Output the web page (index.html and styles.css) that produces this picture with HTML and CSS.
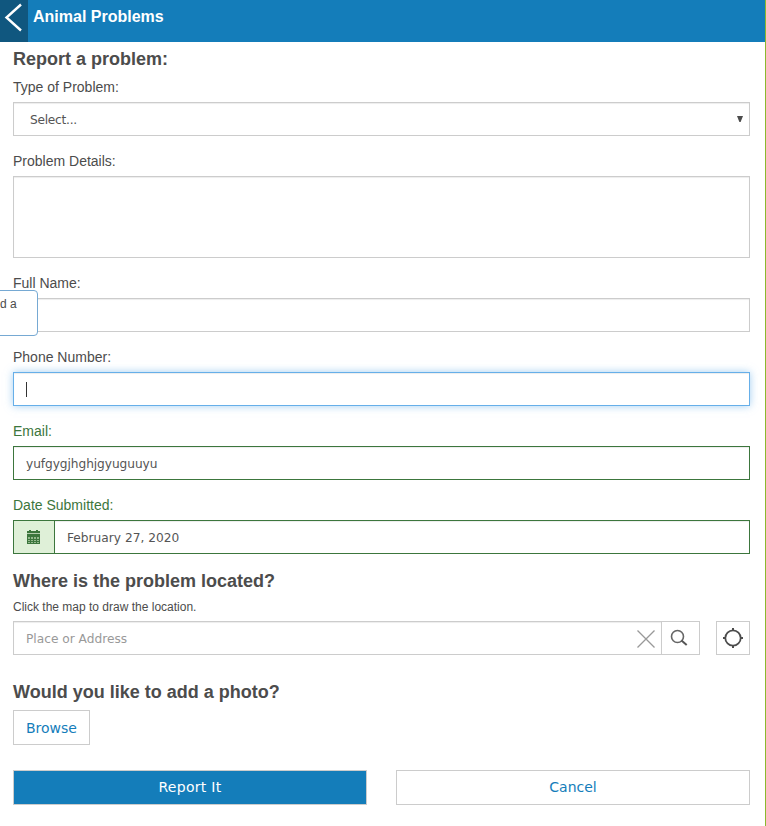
FILE: index.html
```html
<!DOCTYPE html>
<html lang="en">
<head>
  <meta charset="UTF-8">
  <meta name="viewport" content="width=device-width, initial-scale=1.0">
  <title>Animal Problems</title>
  <link rel="stylesheet" href="styles.css">
</head>
<body>
  <div class="panel">
    <div class="header">
      <button type="button" class="back">
        <svg width="28" height="42" viewBox="0 0 28 42"><path d="M21 4.5 L6.5 17.5 L21 30.5" fill="none" stroke="#fff" stroke-width="2.4"/></svg>
      </button>
      <h1>Animal Problems</h1>
    </div>

    <form class="report">
      <h2>Report a problem:</h2>

      <div class="group">
        <label for="type">Type of Problem:</label>
        <div class="select">
          <select id="type" class="control"><option>Select...</option></select>
          <svg class="arrow" width="6" height="6" viewBox="0 0 6 6"><path d="M0 0 H6 L3.6 6 H2.4 Z" fill="#4c4c4c"/></svg>
        </div>
      </div>
      <div class="group">
        <label for="details">Problem Details:</label>
        <textarea id="details" class="control"></textarea>
      </div>
      <div class="group">
        <label for="name">Full Name:</label>
        <input type="text" id="name" class="control">
        <div class="tip">d a</div>
      </div>
      <div class="group">
        <label>Phone Number:</label>
        <div class="control focused"><span class="caret"></span></div>
      </div>
      <div class="group valid">
        <label for="email">Email:</label>
        <input type="text" id="email" class="control" value="yufgygjhghjgyuguuyu">
      </div>
      <div class="group valid">
        <label for="date">Date Submitted:</label>
        <div class="input-row">
          <span class="addon">
            <svg width="13" height="14" viewBox="0 0 13 14" shape-rendering="crispEdges">
              <path d="M2 0h2v1H2z M9 0h2v1H9z M0 1h13v2H0z M0 4h13v10H0z" fill="#3c763d"/>
              <path d="M0 3h13v1H0z" fill="#b3cdad"/>
              <path d="M1 7h2v2H1z M4 7h2v2H4z M7 7h2v2H7z M10 7h2v2h-2z M1 10h2v1H1z M4 10h2v1H4z M7 10h2v1H7z M10 10h2v1h-2z M1 12h2v1H1z M4 12h2v1H4z M7 12h2v1H7z M10 12h2v1h-2z" fill="#95b98e"/>
            </svg>
          </span>
          <input type="text" id="date" class="control" value="February 27, 2020">
        </div>
      </div>

      <h2 class="where">Where is the problem located?</h2>
      <p>Click the map to draw the location.</p>
      <div class="search-row">
        <div class="search">
          <input type="text" class="control" placeholder="Place or Address">
          <svg class="clear" width="18" height="18" viewBox="0 0 18 18"><path d="M0.5 0.5 L17.5 17.5 M17.5 0.5 L0.5 17.5" stroke="#999" stroke-width="1.3"/></svg>
          <button type="button" class="find">
            <svg width="18" height="18" viewBox="0 0 18 18"><circle cx="7.5" cy="7.5" r="6" fill="none" stroke="#666" stroke-width="1.6"/><path d="M11.5 11.5 L16.7 16" stroke="#555" stroke-width="2"/></svg>
          </button>
        </div>
        <button type="button" class="locate">
          <svg width="20" height="20" viewBox="0 0 20 20"><circle cx="10" cy="10" r="7.7" fill="none" stroke="#4c4c4c" stroke-width="1.8"/><path d="M10 0 V3 M10 17 V20 M0 10 H3 M17 10 H20" stroke="#4c4c4c" stroke-width="2"/></svg>
        </button>
      </div>

      <h2 class="photo">Would you like to add a photo?</h2>
      <button type="button" class="btn browse">Browse</button>

      <div class="actions">
        <button type="button" class="btn primary">Report It</button>
        <button type="button" class="btn">Cancel</button>
      </div>
    </form>
  </div>
</body>
</html>
```

FILE: styles.css
```css
* {
  box-sizing: border-box;
}
body {
  margin: 0;
  background: #fff;
  color: #4c4c4c;
  font: 14px/20px "Liberation Sans", Arial, sans-serif;
}
.panel {
  height: 826px;
  border-right: 1px solid #8cb82e;
}
.header {
  display: flex;
  height: 42px;
  background: #147dba;
}
.back {
  width: 28px;
  height: 42px;
  padding: 0;
  border: 0;
  background: #10577f;
}
.back svg {
  display: block;
}
h1 {
  margin: 7px 0 0 5px;
  color: #fff;
  font-size: 16px;
  line-height: 20px;
}
.report {
  padding: 7px 15px 0 13px;
}
h2 {
  margin: 0;
  font-size: 18px;
  line-height: 20px;
}
.group {
  position: relative;
  margin-bottom: 15px;
}
h2 + .group {
  margin-top: 8px;
}
label {
  display: block;
  margin-bottom: 5px;
}
.control {
  display: block;
  width: 100%;
  height: 34px;
  padding: 7px 12px 5px;
  border: 1px solid #ccc;
  border-radius: 0;
  outline: 0;
  background: #fff;
  box-shadow: inset 0 1px 1px rgba(0, 0, 0, .075);
  color: #555;
  font: 12.2px/20px "DejaVu Sans", Verdana, sans-serif;
}
.control::placeholder {
  color: #999;
}
textarea.control {
  height: 82px;
  resize: none;
}
.select {
  position: relative;
}
select.control {
  padding-left: 16px;
  letter-spacing: -.25px;
  appearance: none;
}
.arrow {
  position: absolute;
  top: 14px;
  right: 7px;
}
.tip {
  position: absolute;
  top: 17px;
  left: -23px;
  width: 48px;
  height: 46px;
  padding: 4px 9px;
  border: 1px solid #76a9d3;
  border-radius: 4px;
  background: #fff;
  font-size: 12px;
  line-height: 18px;
}
.focused {
  padding: 9px 12px;
  border-color: #66afe9;
  box-shadow: inset 0 1px 1px rgba(0, 0, 0, .075), 0 0 8px rgba(102, 175, 233, .6);
}
.caret {
  display: block;
  width: 1px;
  height: 15px;
  background: #333;
}
.valid {
  color: #3c763d;
}
.valid .control {
  border-color: #3c763d;
}
#email {
  letter-spacing: -.07px;
}
.input-row {
  display: flex;
}
.addon {
  display: flex;
  flex: none;
  align-items: center;
  width: 41px;
  padding-left: 13px;
  border: 1px solid #3c763d;
  border-right: 0;
  background: #dff0d8;
}
.where {
  margin-top: 17px;
}
p {
  margin: 6px 0 4px;
  font-size: 12px;
}
.search-row {
  display: flex;
  gap: 16px;
}
.search {
  position: relative;
  display: flex;
  flex: 1;
}
.clear {
  position: absolute;
  top: 9px;
  right: 45px;
}
.find,
.locate {
  display: flex;
  flex: none;
  align-items: center;
  justify-content: center;
  height: 34px;
  padding: 0;
  border: 1px solid #ccc;
  background: #fff;
}
.find {
  width: 38px;
  padding-right: 4px;
  border-left: 0;
}
.locate {
  width: 34px;
}
.photo {
  margin-top: 27px;
}
.btn {
  height: 35px;
  padding: 0 12px 2px;
  border: 1px solid #ccc;
  background: #fff;
  color: #147dba;
  font: 14px/20px "DejaVu Sans", Verdana, sans-serif;
}
.browse {
  display: block;
  width: 77px;
  padding-bottom: 0;
  margin-top: 8px;
}
.actions {
  display: grid;
  grid-template-columns: 1fr 1fr;
  gap: 29px;
  margin-top: 25px;
}
.primary {
  background: #147dba;
  color: #fff;
  letter-spacing: .3px;
}
```
